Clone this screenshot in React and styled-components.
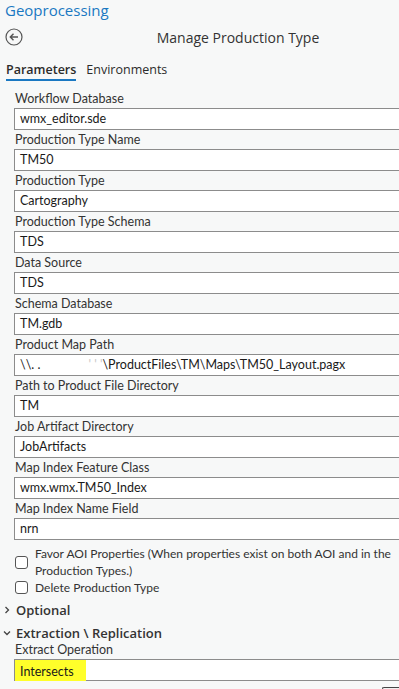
import React from "react";
import styled, { createGlobalStyle } from "styled-components";

const GlobalStyle = createGlobalStyle`
  html, body {
    margin: 0;
    padding: 0;
    background: #f7f8f8;
    font-family: "Open Sans", "Noto Sans", sans-serif;
    color: #2b2b2b;
  }
`;

const fields = [
  { label: "Workflow Database", value: "wmx_editor.sde" },
  { label: "Production Type Name", value: "TM50" },
  { label: "Production Type", value: "Cartography" },
  { label: "Production Type Schema", value: "TDS" },
  { label: "Data Source", value: "TDS" },
  { label: "Schema Database", value: "TM.gdb" },
  { label: "Product Map Path", value: "path" },
  { label: "Path to Product File Directory", value: "TM" },
  { label: "Job Artifact Directory", value: "JobArtifacts" },
  { label: "Map Index Feature Class", value: "wmx.wmx.TM50_Index" },
  { label: "Map Index Name Field", value: "nrn" },
];

const BackIcon = () => (
  <svg width="18" height="18" viewBox="0 0 18 18">
    <circle cx="9" cy="9" r="8" fill="none" stroke="#555" strokeWidth="1.2" />
    <path d="M13 9H5.5M8.5 5.8L5.3 9l3.2 3.2" fill="none" stroke="#555" strokeWidth="1.4" />
  </svg>
);

const Chevron = ({ open }) => (
  <svg width="8" height="8" viewBox="0 0 8 8">
    {open ? (
      <path d="M1 2.5l3 3 3-3" fill="none" stroke="#444" strokeWidth="1.3" />
    ) : (
      <path d="M2.5 1l3 3-3 3" fill="none" stroke="#444" strokeWidth="1.3" />
    )}
  </svg>
);

const App = () => {
  return (
    <Page>
      <GlobalStyle />
      <PaneTitle>Geoprocessing</PaneTitle>
      <ToolHeader>
        <BackButton>
          <BackIcon />
        </BackButton>
        <ToolTitle>Manage Production Type</ToolTitle>
      </ToolHeader>
      <Tabs>
        <Tab active>Parameters</Tab>
        <Tab>Environments</Tab>
      </Tabs>
      <Params>
        {fields.map((f) => (
          <Field key={f.label}>
            <Label>{f.label}</Label>
            <Input>
              {f.value === "path" ? (
                <>
                  {"\\\\. ."}
                  <Redacted>{"' ' '"}</Redacted>
                  {"\\ProductFiles\\TM\\Maps\\TM50_Layout.pagx"}
                </>
              ) : (
                f.value
              )}
            </Input>
          </Field>
        ))}
        <CheckRow gap={5}>
          <CheckBox />
          <CheckText>
            Favor AOI Properties (When properties exist on both AOI and in the Production Types.)
          </CheckText>
        </CheckRow>
        <CheckRow gap={0}>
          <CheckBox />
          <CheckText>Delete Production Type</CheckText>
        </CheckRow>
      </Params>
      <Group>
        <Chevron />
        <GroupTitle>Optional</GroupTitle>
      </Group>
      <Group>
        <Chevron open />
        <GroupTitle>Extraction \ Replication</GroupTitle>
      </Group>
      <Params tight>
        <Field>
          <Label>Extract Operation</Label>
          <Input>
            <Highlight>Intersects</Highlight>
          </Input>
        </Field>
      </Params>
      <Footer>
        <RunButton />
      </Footer>
    </Page>
  );
};

export default App;

const Page = styled.div`
  width: 399px;
  height: 689px;
  overflow: hidden;
  position: relative;
`;

const PaneTitle = styled.div`
  padding: 0 0 0 5px;
  height: 22px;
  font-size: 15px;
  line-height: 20px;
  color: #1a78c2;
`;

const ToolHeader = styled.div`
  display: flex;
  align-items: center;
  height: 30px;
  padding: 0 0 0 5px;
`;

const BackButton = styled.div`
  display: flex;
  width: 18px;
  height: 18px;
`;

const ToolTitle = styled.div`
  flex: 1;
  text-align: center;
  font-size: 14px;
  color: #333;
  padding-left: 54px;
`;

const Tabs = styled.div`
  display: flex;
  gap: 10px;
  padding: 9px 0 0 6px;
  height: 22px;
`;

const Tab = styled.div`
  font-size: 12.5px;
  line-height: 18px;
  height: 20px;
  color: #2b2b2b;
  font-weight: ${(p) => (p.active ? 600 : 400)};
  border-bottom: 2px solid ${(p) => (p.active ? "#1a78c2" : "transparent")};
  box-sizing: border-box;
`;

const Params = styled.div`
  display: flex;
  flex-direction: column;
  padding: ${(p) => (p.tight ? "0" : "6px")} 0 0 14px;
  margin-top: ${(p) => (p.tight ? "-1px" : "0")};
  font-family: "Lato", "Open Sans", sans-serif;
`;

const Field = styled.div`
  display: flex;
  flex-direction: column;
`;

const Label = styled.div`
  height: 19px;
  line-height: 20px;
  font-size: 12.5px;
  padding-left: 1px;
  color: #333;
`;

const Input = styled.div`
  height: 22px;
  box-sizing: border-box;
  border: 1px solid #8c8c8c;
  border-right: none;
  background: #fff;
  font-size: 12.5px;
  line-height: 19px;
  padding-left: 5px;
  color: #1a1a1a;
  white-space: pre;
`;

const Redacted = styled.span`
  color: #c8c8c8;
  padding-left: 48px;
`;

const Highlight = styled.span`
  display: inline-block;
  background: #ffff2a;
  margin-left: -5px;
  padding: 2px 12px 0 5px;
  line-height: 19px;
`;

const CheckRow = styled.div`
  display: flex;
  align-items: center;
  gap: 7px;
  padding: ${(p) => p.gap}px 0 0 1px;
`;

const CheckBox = styled.div`
  flex: none;
  width: 13px;
  height: 13px;
  border: 1px solid #555;
  border-radius: 3px;
  background: #fff;
  box-sizing: border-box;
`;

const CheckText = styled.div`
  font-size: 12px;
  line-height: 17px;
  color: #333;
`;

const Group = styled.div`
  display: flex;
  align-items: center;
  gap: 5px;
  padding: 6px 0 0 3px;
  height: 16px;
  & + & {
    padding-top: 7px;
  }
`;

const GroupTitle = styled.div`
  font-size: 13px;
  font-weight: 600;
  color: #333;
`;

const Footer = styled.div`
  display: flex;
  justify-content: flex-start;
  padding: 6px 0 0 382px;
`;

const RunButton = styled.div`
  width: 30px;
  height: 20px;
  border-top: 1px solid #444;
  border-left: 1px solid #444;
  border-radius: 2px 0 0 0;
  background: #f0f0f0;
`;
